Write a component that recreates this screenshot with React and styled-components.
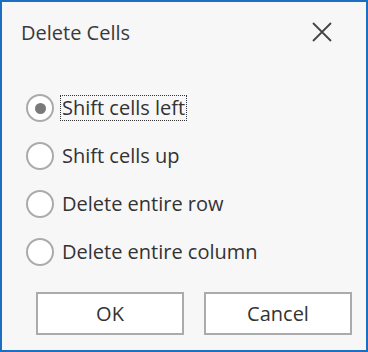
import React, { useState } from 'react';
import styled, { createGlobalStyle } from 'styled-components';

const GlobalStyle = createGlobalStyle`
    html, body {
        margin: 0;
        padding: 0;
        background: #f7f7f7;
    }
    * {
        box-sizing: border-box;
    }
`;

const options = [
    'Shift cells left',
    'Shift cells up',
    'Delete entire row',
    'Delete entire column',
];

const App = () => {
    const [selected, setSelected] = useState(0);

    return (
        <>
            <GlobalStyle />
            <Dialog>
                <TitleBar>
                    <Title>Delete Cells</Title>
                    <CloseButton aria-label="Close">
                        <svg width="20" height="20" viewBox="0 0 20 20">
                            <path d="M1 1 L19 19 M19 1 L1 19" stroke="#444" strokeWidth="1.8" fill="none" />
                        </svg>
                    </CloseButton>
                </TitleBar>

                <OptionList>
                    {options.map((label, i) => (
                        <Option key={label} onClick={() => setSelected(i)}>
                            <Radio $checked={selected === i} />
                            <OptionLabel $focused={i === 0}>{label}</OptionLabel>
                        </Option>
                    ))}
                </OptionList>

                <ButtonRow>
                    <Button>OK</Button>
                    <Button>Cancel</Button>
                </ButtonRow>
            </Dialog>
        </>
    );
};

const Dialog = styled.div`
    width: 368px;
    height: 352px;
    border: 2px solid #1b6ec2;
    background: #f7f7f7;
    font-family: "Open Sans", "Noto Sans", sans-serif;
    font-size: 20px;
    color: #333;
    display: flex;
    flex-direction: column;
`;

const TitleBar = styled.div`
    display: flex;
    align-items: center;
    justify-content: space-between;
    height: 60px;
    padding: 0 34px 0 19px;
`;

const Title = styled.span`
    color: #3a3a3a;
`;

const CloseButton = styled.div`
    width: 20px;
    height: 20px;
    display: flex;
    margin-top: -1px;
`;

const OptionList = styled.div`
    display: flex;
    flex-direction: column;
    gap: 22px;
    padding: 33px 0 0 24px;
`;

const Option = styled.div`
    display: flex;
    align-items: center;
    gap: 6px;
    height: 26px;
    cursor: default;
`;

const Radio = styled.span`
    width: 28px;
    height: 28px;
    border-radius: 50%;
    border: 2px solid #ababab;
    background: #fff;
    display: flex;
    align-items: center;
    justify-content: center;
    &::after {
        content: '';
        width: 11px;
        height: 11px;
        border-radius: 50%;
        background: ${p => (p.$checked ? '#7a7a7a' : 'transparent')};
    }
`;

const OptionLabel = styled.span`
    line-height: 24px;
    padding: 0 1px;
    border: 1px ${p => (p.$focused ? 'dotted #333' : 'solid transparent')};
`;

const ButtonRow = styled.div`
    display: flex;
    gap: 20px;
    padding: 0 14px 0 34px;
    margin-top: auto;
    margin-bottom: 15px;
`;

const Button = styled.button`
    width: 148px;
    height: 43px;
    background: #fff;
    border: 2px solid #ababab;
    border-radius: 0;
    font-family: inherit;
    font-size: 20px;
    color: #333;
    padding: 0;
`;

export default App;
